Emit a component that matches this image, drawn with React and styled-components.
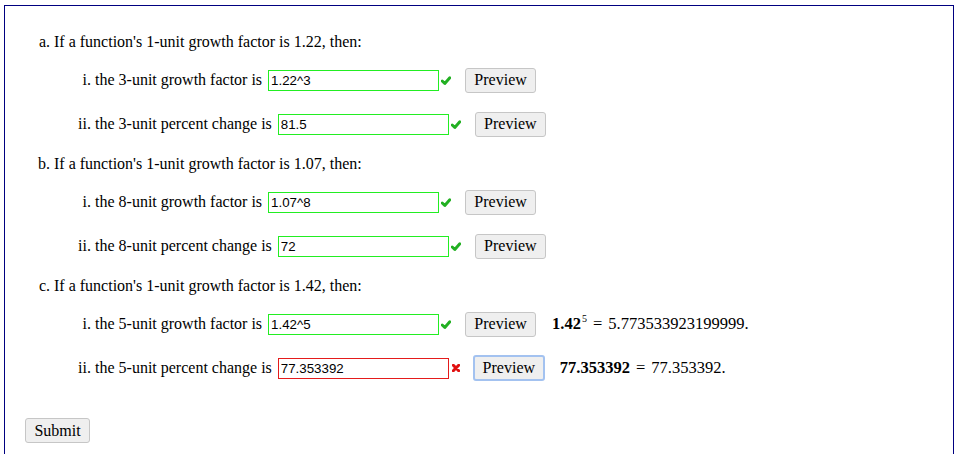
import React from "react";
import styled, { createGlobalStyle, css } from "styled-components";

const Global = createGlobalStyle`
  html, body { margin: 0; padding: 0; background: #fff; }
  body { font-family: "Liberation Serif", "Times New Roman", serif; font-size: 16px; color: #000; }
`;

const Frame = styled.div`
  box-sizing: border-box;
  width: 950px;
  min-height: 480px;
  margin: 5px 0 0 4px;
  border: 1px solid #000080;
  padding: 26px 0 0 0;
`;

const PartList = styled.ol`
  list-style: lower-alpha outside;
  margin: 0;
  padding: 0 0 0 49px;
`;

const Part = styled.li`
  line-height: 20px;
`;

const Question = styled.div`
  height: 20px;
  line-height: 20px;
`;

const SubList = styled.ol`
  list-style: lower-roman outside;
  margin: 15px 0 17px;
  padding: 0 0 0 41px;
`;

const SubItem = styled.li`
  height: 26px;
  line-height: 26px;
  & + & { margin-top: 18px; }
`;

const Row = styled.div`
  display: inline-flex;
  align-items: center;
  height: 26px;
  vertical-align: top;
`;

const Label = styled.span`
  margin-right: 6px;
  white-space: nowrap;
`;

const Answer = styled.input`
  box-sizing: border-box;
  width: 171px;
  height: 21px;
  margin: 0;
  padding: 1px 2px;
  border: 1px solid ${p => (p.$ok ? "#22ee22" : "#e41b1b")};
  font-family: "Liberation Sans", Arial, sans-serif;
  font-size: 13.3px;
  color: #000;
  outline: none;
`;

const Mark = styled.span`
  display: inline-flex;
  width: 10px;
  margin-left: 2px;
  margin-right: 14px;
  justify-content: center;
`;

const PreviewButton = styled.button`
  box-sizing: border-box;
  height: 25px;
  width: 71px;
  padding: 0;
  margin: 0;
  font-family: "Liberation Serif", "Times New Roman", serif;
  font-size: 16px;
  color: #000;
  background: #efefef;
  border: 1px solid #c6c6c6;
  border-radius: 3px;
  ${p => p.$focus && css`
    border: 2px solid #a3c2f0;
    width: 72px;
    height: 26px;
    margin-left: -2px;
    margin-right: -1px;
  `}
`;

const MathOut = styled.span`
  margin-left: 16px;
  font-family: "Liberation Serif", "Times New Roman", serif;
  font-size: 16.5px;
  white-space: nowrap;
`;

const Bold = styled.b`
  font-weight: bold;
`;

const Sup = styled.sup`
  font-size: 10px;
  line-height: 0;
  vertical-align: 7px;
  font-weight: normal;
  margin-left: 1px;
`;

const Eq = styled.span`
  margin: 0 6px;
`;

const SubmitButton = styled.button`
  box-sizing: border-box;
  margin: 20px 0 0 20px;
  height: 25px;
  width: 65px;
  padding: 0;
  font-family: "Liberation Serif", "Times New Roman", serif;
  font-size: 16px;
  color: #000;
  background: #efefef;
  border: 1px solid #c6c6c6;
  border-radius: 3px;
`;

const Check = () => (
  <svg width="10" height="9" viewBox="0 0 10 9">
    <path d="M1.2 5 L3.8 7.4 L8.8 1.8" fill="none" stroke="#22b022" strokeWidth="3" strokeLinecap="round" strokeLinejoin="round" />
  </svg>
);

const Cross = () => (
  <svg width="8" height="8" viewBox="0 0 8 8">
    <path d="M1.3 1.3 L6.7 6.7 M6.7 1.3 L1.3 6.7" fill="none" stroke="#e01010" strokeWidth="3" strokeLinecap="round" />
  </svg>
);

const parts = [
  {
    factor: "1.22",
    rows: [
      { label: "the 3-unit growth factor is", value: "1.22^3", ok: true },
      { label: "the 3-unit percent change is", value: "81.5", ok: true },
    ],
  },
  {
    factor: "1.07",
    rows: [
      { label: "the 8-unit growth factor is", value: "1.07^8", ok: true },
      { label: "the 8-unit percent change is", value: "72", ok: true },
    ],
  },
  {
    factor: "1.42",
    rows: [
      {
        label: "the 5-unit growth factor is",
        value: "1.42^5",
        ok: true,
        math: (
          <>
            <Bold>1.42<Sup>5</Sup></Bold>
            <Eq>=</Eq>5.773533923199999.
          </>
        ),
      },
      {
        label: "the 5-unit percent change is",
        value: "77.353392",
        ok: false,
        focus: true,
        math: (
          <>
            <Bold>77.353392</Bold>
            <Eq>=</Eq>77.353392.
          </>
        ),
      },
    ],
  },
];

export default function App() {
  return (
    <>
      <Global />
      <Frame>
        <PartList>
          {parts.map((p, i) => (
            <Part key={i}>
              <Question>If a function's 1-unit growth factor is {p.factor}, then:</Question>
              <SubList>
                {p.rows.map((r, j) => (
                  <SubItem key={j}>
                    <Row>
                      <Label>{r.label}</Label>
                      <Answer $ok={r.ok} defaultValue={r.value} readOnly />
                      <Mark>{r.ok ? <Check /> : <Cross />}</Mark>
                      <PreviewButton $focus={r.focus}>Preview</PreviewButton>
                      {r.math && <MathOut>{r.math}</MathOut>}
                    </Row>
                  </SubItem>
                ))}
              </SubList>
            </Part>
          ))}
        </PartList>
        <SubmitButton>Submit</SubmitButton>
      </Frame>
    </>
  );
}
